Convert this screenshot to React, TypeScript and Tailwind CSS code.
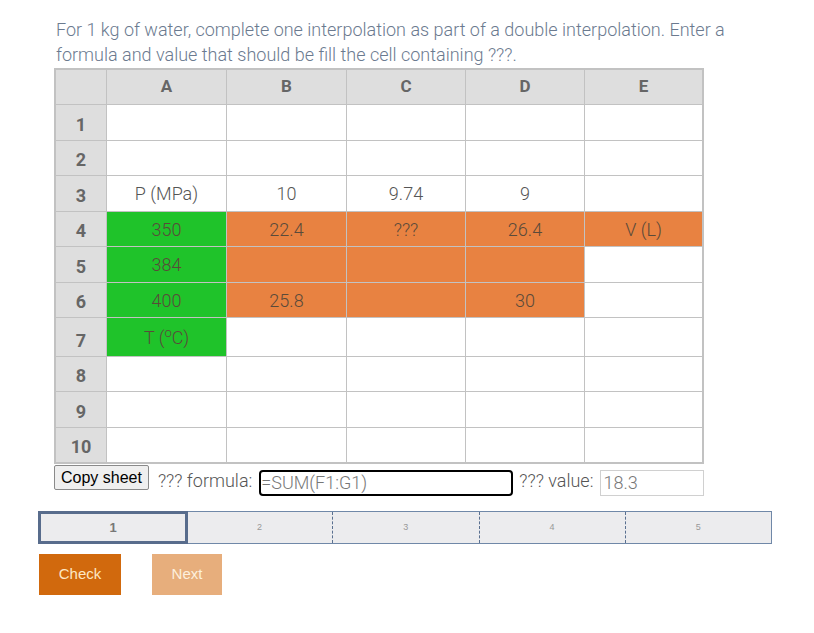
import React from 'react';

type Cell = { text?: string; bg?: 'green' | 'orange' };

const cols = ['A', 'B', 'C', 'D', 'E'];

const rows: Cell[][] = [
  [{}, {}, {}, {}, {}],
  [{}, {}, {}, {}, {}],
  [{ text: 'P (MPa)' }, { text: '10' }, { text: '9.74' }, { text: '9' }, {}],
  [
    { text: '350', bg: 'green' },
    { text: '22.4', bg: 'orange' },
    { text: '???', bg: 'orange' },
    { text: '26.4', bg: 'orange' },
    { text: 'V (L)', bg: 'orange' },
  ],
  [{ text: '384', bg: 'green' }, { bg: 'orange' }, { bg: 'orange' }, { bg: 'orange' }, {}],
  [{ text: '400', bg: 'green' }, { text: '25.8', bg: 'orange' }, { bg: 'orange' }, { text: '30', bg: 'orange' }, {}],
  [{ text: 'T (°C)', bg: 'green' }, {}, {}, {}, {}],
  [{}, {}, {}, {}, {}],
  [{}, {}, {}, {}, {}],
  [{}, {}, {}, {}, {}],
];

const cellBg = (c: Cell) =>
  c.bg === 'green' ? 'bg-[#1fc32a]' : c.bg === 'orange' ? 'bg-[#e88241]' : 'bg-white';

const renderText = (t?: string) => {
  if (t === 'T (°C)') {
    return (
      <span>
        T (<sup className="text-[13px]">o</sup>C)
      </span>
    );
  }
  return t;
};

export default function App() {
  return (
    <div className="min-h-screen bg-white px-[38px] pt-[17px]" style={{ fontFamily: 'Roboto, "Open Sans", sans-serif' }}>
      <p className="ml-[18px] w-[690px] text-[18px] leading-[25px] font-light text-[#6b7a8f] mb-[1px]">
        For 1 kg of water, complete one interpolation as part of a double interpolation. Enter a formula and value that should be fill the cell containing ???.
      </p>

      {/* Sheet */}
      <div className="ml-[16px] w-[650px] border-2 border-[#c2c2c2] bg-[#c2c2c2]">
        <div className="grid grid-cols-[50px_119px_119px_118px_118px_117px] grid-rows-[34px_35px_34px_35px_34px_35px_34px_38px_34px_35px_34px] gap-px">
          <div className="bg-[#dedede]" />
          {cols.map((c) => (
            <div key={c} className="bg-[#dedede] flex items-center justify-center font-bold text-[17px] text-[#666]">
              {c}
            </div>
          ))}
          {rows.map((r, i) => (
            <React.Fragment key={i}>
              <div className="bg-[#dedede] flex items-end justify-center pb-[2px] font-bold text-[18px] text-[#666]">
                {i + 1}
              </div>
              {r.map((c, j) => (
                <div
                  key={j}
                  className={`${cellBg(c)} flex items-center justify-center text-[18px] font-light ${c.bg ? 'text-[#5a4a3a]' : 'text-[#555]'}`}
                >
                  {renderText(c.text)}
                </div>
              ))}
            </React.Fragment>
          ))}
        </div>
      </div>

      {/* Formula row */}
      <div className="ml-[16px] flex items-start mt-[1px]">
        <button className="h-[25px] px-[6px] bg-[#efefef] border border-[#8a8a8a] rounded-[2px] text-[16px] text-black leading-none" style={{ fontFamily: '"Liberation Sans", Arial, sans-serif' }}>
          Copy sheet
        </button>
        <span className="ml-[9px] mt-[4px] text-[18px] leading-[24px] font-light text-[#555]">??? formula:</span>
        <div className="ml-[7px] mt-[5px] w-[254px] h-[26px] border-2 border-black rounded-[4px] flex items-center text-[18px] font-light text-[#777] leading-none">
          =SUM(F1:G1)
        </div>
        <span className="ml-[6px] mt-[4px] text-[18px] leading-[24px] font-light text-[#555]">??? value:</span>
        <div className="ml-[7px] mt-[5px] w-[104px] h-[26px] border border-[#d0d0d0] flex items-center pl-[2px] text-[18px] font-light text-[#777] leading-none">
          18.3
        </div>
      </div>

      {/* Progress */}
      <div className="mt-[15px] w-[734px] h-[33px] flex border border-[#7088a8] bg-[#ececee]">
        <div className="w-[150px] -m-px h-[33px] border-[3px] border-[#586c8c] flex items-center justify-center text-[13px] font-bold text-[#777]" style={{ fontFamily: 'Arial, "Liberation Sans", sans-serif' }}>
          1
        </div>
        {['2', '3', '4', '5'].map((n, i) => (
          <div
            key={n}
            className={`flex-1 flex items-center justify-center text-[9px] text-[#999] ${i < 3 ? 'border-r border-dashed border-[#5a7090]' : ''}`}
            style={{ fontFamily: 'Arial, "Liberation Sans", sans-serif' }}
          >
            {n}
          </div>
        ))}
      </div>

      {/* Buttons */}
      <div className="mt-[10px] ml-px flex gap-[31px]" style={{ fontFamily: '"Liberation Sans", Arial, sans-serif' }}>
        <button className="w-[82px] h-[41px] bg-[#d1690d] text-[#fde7c4] text-[15px]">Check</button>
        <button className="w-[70px] h-[41px] bg-[#e7ae7c] text-[#fdf0dc] text-[15px]">Next</button>
      </div>
    </div>
  );
}
